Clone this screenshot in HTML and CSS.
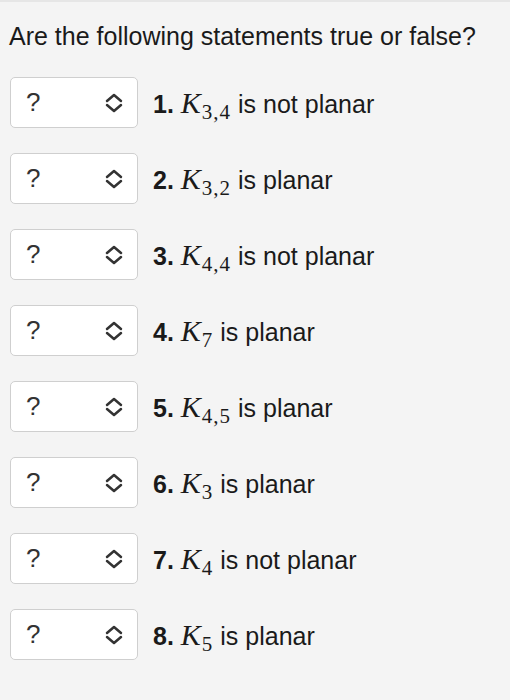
FILE: index.html
```html
<!DOCTYPE html>
<html>
<head>
  <title>True or false</title>
  <link rel="stylesheet" href="styles.css">
</head>
<body>
  <div class="top-line"></div>
  <h1 class="question">Are the following statements true or false?</h1>
  <div class="items">
    <div class="item">
      <div class="select"><span class="value">?</span><svg class="arrows" width="18" height="20" viewBox="0 0 18 20"><path d="M2 8 L9 2 L16 8 M2 12 L9 18 L16 12" fill="none" stroke="#333" stroke-width="2.5" stroke-linecap="round" stroke-linejoin="round"/></svg></div>
      <div class="label"><b>1.</b> <span class="math">K<sub>3,4</sub></span> is not planar</div>
    </div>
    <div class="item">
      <div class="select"><span class="value">?</span><svg class="arrows" width="18" height="20" viewBox="0 0 18 20"><path d="M2 8 L9 2 L16 8 M2 12 L9 18 L16 12" fill="none" stroke="#333" stroke-width="2.5" stroke-linecap="round" stroke-linejoin="round"/></svg></div>
      <div class="label"><b>2.</b> <span class="math">K<sub>3,2</sub></span> is planar</div>
    </div>
    <div class="item">
      <div class="select"><span class="value">?</span><svg class="arrows" width="18" height="20" viewBox="0 0 18 20"><path d="M2 8 L9 2 L16 8 M2 12 L9 18 L16 12" fill="none" stroke="#333" stroke-width="2.5" stroke-linecap="round" stroke-linejoin="round"/></svg></div>
      <div class="label"><b>3.</b> <span class="math">K<sub>4,4</sub></span> is not planar</div>
    </div>
    <div class="item">
      <div class="select"><span class="value">?</span><svg class="arrows" width="18" height="20" viewBox="0 0 18 20"><path d="M2 8 L9 2 L16 8 M2 12 L9 18 L16 12" fill="none" stroke="#333" stroke-width="2.5" stroke-linecap="round" stroke-linejoin="round"/></svg></div>
      <div class="label"><b>4.</b> <span class="math">K<sub>7</sub></span> is planar</div>
    </div>
    <div class="item">
      <div class="select"><span class="value">?</span><svg class="arrows" width="18" height="20" viewBox="0 0 18 20"><path d="M2 8 L9 2 L16 8 M2 12 L9 18 L16 12" fill="none" stroke="#333" stroke-width="2.5" stroke-linecap="round" stroke-linejoin="round"/></svg></div>
      <div class="label"><b>5.</b> <span class="math">K<sub>4,5</sub></span> is planar</div>
    </div>
    <div class="item">
      <div class="select"><span class="value">?</span><svg class="arrows" width="18" height="20" viewBox="0 0 18 20"><path d="M2 8 L9 2 L16 8 M2 12 L9 18 L16 12" fill="none" stroke="#333" stroke-width="2.5" stroke-linecap="round" stroke-linejoin="round"/></svg></div>
      <div class="label"><b>6.</b> <span class="math">K<sub>3</sub></span> is planar</div>
    </div>
    <div class="item">
      <div class="select"><span class="value">?</span><svg class="arrows" width="18" height="20" viewBox="0 0 18 20"><path d="M2 8 L9 2 L16 8 M2 12 L9 18 L16 12" fill="none" stroke="#333" stroke-width="2.5" stroke-linecap="round" stroke-linejoin="round"/></svg></div>
      <div class="label"><b>7.</b> <span class="math">K<sub>4</sub></span> is not planar</div>
    </div>
    <div class="item">
      <div class="select"><span class="value">?</span><svg class="arrows" width="18" height="20" viewBox="0 0 18 20"><path d="M2 8 L9 2 L16 8 M2 12 L9 18 L16 12" fill="none" stroke="#333" stroke-width="2.5" stroke-linecap="round" stroke-linejoin="round"/></svg></div>
      <div class="label"><b>8.</b> <span class="math">K<sub>5</sub></span> is planar</div>
    </div>
  </div>
</body>
</html>
```

FILE: styles.css
```css
body {
  margin: 0;
  background-color: #f4f4f4;
  font-family: 'Liberation Sans', Arial, sans-serif;
  color: #1a1a1a;
}
.top-line {
  height: 2px;
  background-color: #e6e6e6;
}
.question {
  font-size: 25px;
  font-weight: normal;
  line-height: 28px;
  margin: 20px 0 0 9px;
}
.items {
  display: flex;
  flex-direction: column;
  gap: 25px;
  margin-top: 27px;
  padding-left: 10px;
}
.item {
  display: flex;
  align-items: center;
}
.select {
  height: 49px;
  width: 97px;
  background-color: #fff;
  border: 1px solid #cfcfcf;
  border-radius: 5px;
  display: flex;
  align-items: center;
  justify-content: space-between;
  padding: 0 14px 0 15px;
}
.value {
  font-size: 26px;
  color: #333;
}
.arrows {
  display: block;
}
.label {
  margin-left: 15px;
  font-size: 25px;
}
.label b {
  font-weight: bold;
}
.math {
  font-family: 'Liberation Serif', 'Times New Roman', serif;
  font-style: italic;
  font-size: 30px;
}
.math sub {
  font-style: normal;
  font-size: 21px;
  letter-spacing: 1px;
  margin-left: 1px;
  vertical-align: -6px;
  line-height: 0;
}
```
